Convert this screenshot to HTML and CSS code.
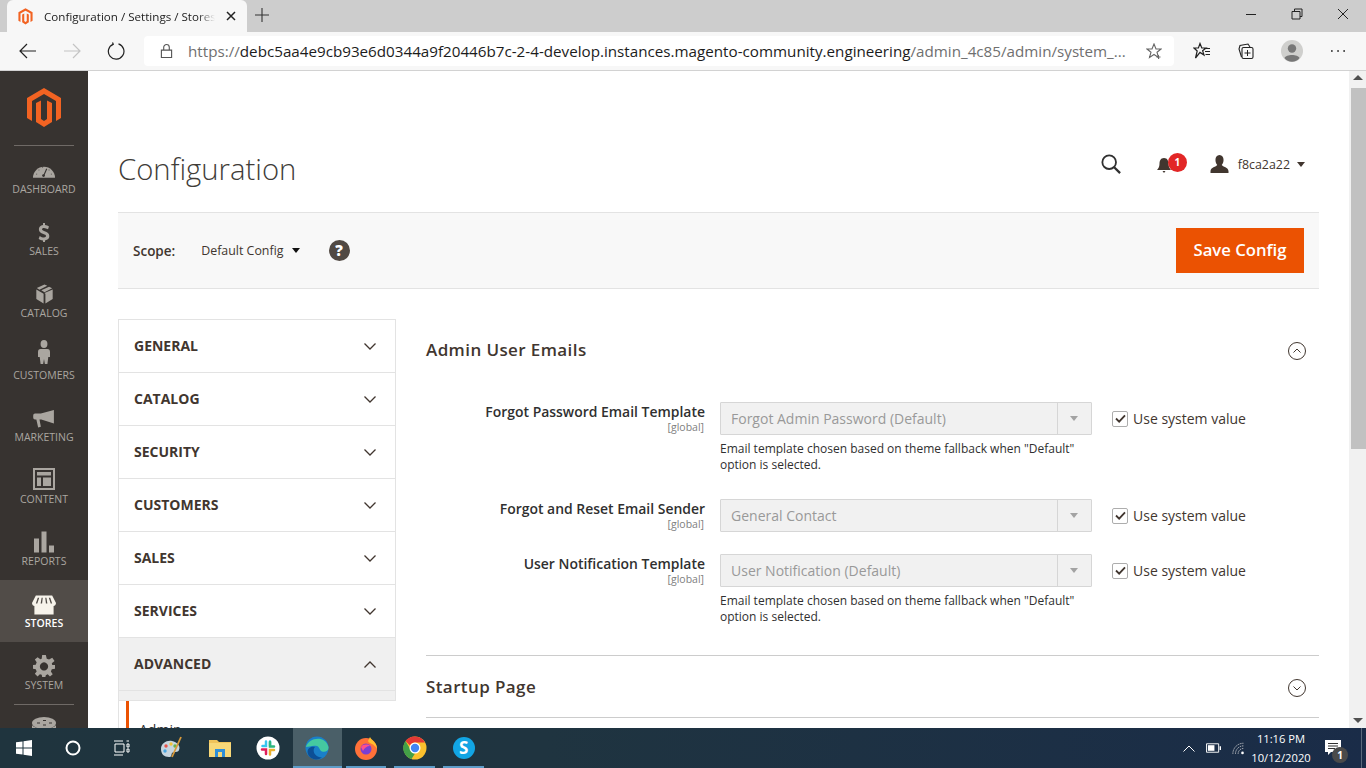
FILE: index.html
```html
<!DOCTYPE html>
<html lang="en">
<head>
    <meta charset="UTF-8">
    <title>Configuration / Settings / Stores</title>
    <link rel="stylesheet" href="styles.css">
</head>
<body>
<div class="screen">

    <!-- browser tabs -->
    <div class="tabstrip">
        <div class="tab">
            <svg class="tab-logo" viewBox="0 0 36 40"><path fill="#f26322" d="M18 0L35 10V30L30 33V13L18 6L6 13V33L1 30V10Z"/><path fill="#f26322" d="M10 15L15 12.5V31L18 33L21 31V12.5L26 15V34L18 39L10 34Z"/></svg>
            <span class="tab-title">Configuration / Settings / Stores</span>
            <svg class="tab-close" viewBox="0 0 10 10"><path d="M1 1L9 9M9 1L1 9" stroke="#222" stroke-width="1.5"/></svg>
        </div>
        <svg class="new-tab" viewBox="0 0 14 14"><path d="M7 0V14M0 7H14" stroke="#333" stroke-width="1.1"/></svg>
        <div class="win-controls">
            <svg viewBox="0 0 12 12"><path d="M1 6.5H11" stroke="#222"/></svg>
            <svg viewBox="0 0 12 12"><path d="M1 3.5H9V11H1ZM3.5 3.5V1H11V8.500H9" fill="none" stroke="#222"/></svg>
            <svg viewBox="0 0 12 12"><path d="M1 1L11 11M11 1L1 11" stroke="#222"/></svg>
        </div>
    </div>

    <!-- browser toolbar -->
    <div class="toolbar">
        <div class="nav-btn"><svg viewBox="0 0 18 18"><path d="M1 9H17M8 2L1 9L8 16" fill="none" stroke="#222" stroke-width="1.2"/></svg></div>
        <div class="nav-btn"><svg viewBox="0 0 18 18"><path d="M1 9H17M10 2L17 9L10 16" fill="none" stroke="#c4c4c4" stroke-width="1.2"/></svg></div>
        <div class="nav-btn"><svg viewBox="0 0 18 18"><path d="M6 2.200A7.800 7.800 0 1 0 11.500 1.900M5.500 0.500L6.300 2.400L4.200 3.800" fill="none" stroke="#222" stroke-width="1.2"/></svg></div>
        <div class="address">
            <svg class="lock" viewBox="0 0 14 16"><path d="M1.500 7H12.500V15H1.500ZM4 7V4A3 3 0 0 1 10 4V7" fill="none" stroke="#555" stroke-width="1.200"/></svg>
            <div class="url"><span class="url-dim">https://</span>debc5aa4e9cb93e6d0344a9f20446b7c-2-4-develop.instances.magento-community.engineering<span class="url-dim">/admin_4c85/admin/system_...</span></div>
            <svg class="star" viewBox="0 0 16 16"><path d="M8 1L10 6H15L11 9.200L12.500 14.500L8 11.500L3.500 14.500L5 9.200L1 6H6Z" fill="none" stroke="#666" stroke-width="1.100"/><path d="M12.500 12V16M10.500 14H14.500" stroke="#666"/></svg>
        </div>
        <div class="tool-icons">
            <svg viewBox="0 0 18 18"><path d="M7 1.500L8.800 6H13L9.600 8.700L11 13L7 10.400L2.500 16L4.200 9L1 6H5.400Z" fill="none" stroke="#222" stroke-width="1.200"/><path d="M11 6.500H17M12 9.500H17M12.500 12.500H17" stroke="#222"/></svg>
            <svg viewBox="0 0 18 18"><path d="M4.500 15L2 7L3 3.500L11 2L13 5" fill="none" stroke="#222" stroke-width="1.100"/><rect x="5" y="5.500" width="11" height="11" rx="1.500" fill="#f7f7f7" stroke="#222" stroke-width="1.100"/><path d="M10.500 8V14M7.500 11H13.500" stroke="#222"/></svg>
            <svg class="avatar" viewBox="0 0 22 22"><circle cx="11" cy="11" r="11" fill="#cfcfcd"/><circle cx="11" cy="8.500" r="4.200" fill="#777"/><path d="M3.500 18C5 14 17 14 18.500 18C15 23 7 23 3.500 18Z" fill="#777"/></svg>
            <svg viewBox="0 0 18 18"><path d="M2 9h1.700M8.200 9h1.700M14.300 9h1.700" stroke="#222" stroke-width="1.500"/></svg>
        </div>
    </div>

    <div class="viewport">

        <!-- magento admin menu -->
        <nav class="menu">
            <div class="menu-logo">
                <svg viewBox="0 0 36 40"><path fill="#f26322" d="M18 0L35 10V30L30 33V13L18 6L6 13V33L1 30V10Z"/><path fill="#f26322" d="M10 15L15 12.500V31L18 33L21 31V12.500L26 15V34L18 39L10 34Z"/></svg>
            </div>
            <div class="menu-item">
                <svg class="ic-dashboard" viewBox="0 0 24 16"><path d="M0 16A12 12 0 0 1 24 16Z"/><path d="M11.500 14L15 6" stroke="#373330" stroke-width="1.200"/><circle cx="11.500" cy="13.500" r="1.500" fill="#373330"/><path d="M3.500 12h1M6 7.500h1M10 4.500h1M17 7.500h1M19.500 12h1" stroke="#373330" stroke-width="0.800"/></svg>
                <span>Dashboard</span>
            </div>
            <div class="menu-item">
                <svg class="ic-sales" viewBox="0 0 18 24" preserveAspectRatio="none"><path d="M7.500 0H10.500V2.500C13 2.800 15 3.500 16.500 4.500L15 8C13 7 11 6.300 9 6.300C7 6.300 6 7 6 8C6 9.200 7.500 9.700 10 10.500C14 11.700 17 13 17 16.500C17 19.500 14.800 21.500 10.500 22V24H7.500V22C5 21.800 2.500 21 1 19.800L2.700 16.300C4.500 17.500 7 18.300 9 18.300C11 18.300 12 17.600 12 16.500C12 15.300 10.500 14.800 8 14C4 12.800 1.300 11.300 1.300 8C1.300 5 3.500 3 7.500 2.500Z"/></svg>
                <span>Sales</span>
            </div>
            <div class="menu-item">
                <svg class="ic-catalog" viewBox="0 0 20 22"><path d="M10 10L19 6V16.500L11 21.500V10.600ZM9 10.600V21.500L1 16.500V6Z"/><path d="M1.500 4.500L10 0.500L13 2L4.500 6.200ZM6.500 7L15 3L18.500 4.700L10 9Z"/></svg>
                <span>Catalog</span>
            </div>
            <div class="menu-item">
                <svg class="ic-customers" viewBox="0 0 14 24" preserveAspectRatio="none"><circle cx="7" cy="4" r="4"/><path d="M3 9H11C13 9 14 10 14 12V17H12L11 24H8L7 19L6 24H3L2 17H0V12C0 10 1 9 3 9Z"/></svg>
                <span>Customers</span>
            </div>
            <div class="menu-item">
                <svg class="ic-marketing" viewBox="0 0 24 20"><path d="M23 0V15L9 10.500H7L8.500 18.500L5.500 19.500L3.500 10.500H2C1 10.500 0 9.500 0 8V6.500C0 5 1 4 2 4H8.500Z"/></svg>
                <span>Marketing</span>
            </div>
            <div class="menu-item">
                <svg class="ic-content" viewBox="0 0 22 22"><path fill-rule="evenodd" d="M0 0H22V22H0ZM2 2V20H20V2ZM4 4H18V7.500H4ZM4 9.500H8V18H4ZM10 9.500H18V18H10Z"/></svg>
                <span>Content</span>
            </div>
            <div class="menu-item">
                <svg class="ic-reports" viewBox="0 0 20 21"><path d="M0 7H5V21H0ZM7.500 0H12.500V21H7.500ZM15 14H20V21H15Z"/></svg>
                <span>Reports</span>
            </div>
            <div class="menu-item active">
                <svg class="ic-stores" viewBox="0 0 25 20"><path fill-rule="evenodd" d="M4 0H21L25 8C25 10 23.500 11 22.500 11V20H2.500V11C1.500 11 0 10 0 8ZM6 2.500L4 8.500H5.500L7.500 2.500ZM10 2.500L9 8.500H10.500L11.200 2.500ZM13.800 2.500L14.500 8.500H16L15 2.500ZM17.500 2.500L19.500 8.500H21L19 2.500Z"/></svg>
                <span>Stores</span>
            </div>
            <div class="menu-item">
                <svg class="ic-system" viewBox="0 0 24 24"><path fill-rule="evenodd" d="M10 0H14L15 4L17.500 5L21 3L23.500 6.500L20.500 9L21 11H24V15L20.500 15.500L19.500 18L21.500 21L18.500 23.500L16 21L14 22L13.500 24H10L9.500 21.500L7.500 21L5 23.500L2 20.500L4 18L3 15.500L0 15V11L3 10.500L4 8L2 5L5 2.500L8 4.500L9.500 4ZM12 8A4.500 4.500 0 1 0 12.010 8Z"/></svg>
                <span>System</span>
            </div>
            <div class="menu-item menu-extra">
                <svg viewBox="0 0 24 20"><ellipse cx="12" cy="6" rx="12" ry="6"/><path d="M0 8C3 13 21 13 24 8V16C21 21 3 21 0 16Z"/><path d="M5 6h3M11 3.500h3M11 8h3M17 6h3" stroke="#373330"/></svg>
            </div>
        </nav>

        <!-- page -->
        <main class="page">
            <header class="page-head">
                <h1>Configuration</h1>
                <div class="head-actions">
                    <svg class="search-icon" viewBox="0 0 22 22"><circle cx="9" cy="9" r="7.500" fill="none" stroke="#303030" stroke-width="2"/><path d="M14.500 14.500L21 21" stroke="#303030" stroke-width="2.500"/></svg>
                    <div class="bell">
                        <svg viewBox="0 0 16 16"><path d="M8 1C11.500 1 12.500 4 12.500 7C12.500 10 14 12 15 13H1C2 12 3.500 10 3.500 7C3.500 4 4.500 1 8 1ZM6.500 14H9.500L8 16Z" fill="#41362f"/></svg>
                        <span class="badge">1</span>
                    </div>
                    <div class="user">
                        <svg viewBox="0 0 20 20"><path d="M10 0C13 0 14.500 2.500 14.500 5.500C14.500 8 13.500 10 12.500 11C13.500 13 20 13.500 20 18V20H0V18C0 13.500 6.500 13 7.500 11C6.500 10 5.500 8 5.500 5.500C5.500 2.500 7 0 10 0Z" fill="#41362f"/></svg>
                        <span>f8ca2a22</span>
                        <i class="caret"></i>
                    </div>
                </div>
            </header>

            <div class="action-bar">
                <div class="scope">
                    <strong>Scope:</strong>
                    <span class="scope-value">Default Config</span>
                    <i class="caret"></i>
                    <span class="help">?</span>
                </div>
                <button class="save-btn">Save Config</button>
            </div>

            <div class="columns">
                <aside class="tabs">
                    <div class="tab-row">General <svg viewBox="0 0 12 7"><path d="M0.500 0.500L6 6L11.500 0.500" fill="none" stroke="#41362f" stroke-width="1.300"/></svg></div>
                    <div class="tab-row">Catalog <svg viewBox="0 0 12 7"><path d="M0.500 0.500L6 6L11.500 0.500" fill="none" stroke="#41362f" stroke-width="1.300"/></svg></div>
                    <div class="tab-row">Security <svg viewBox="0 0 12 7"><path d="M0.500 0.500L6 6L11.500 0.500" fill="none" stroke="#41362f" stroke-width="1.300"/></svg></div>
                    <div class="tab-row">Customers <svg viewBox="0 0 12 7"><path d="M0.500 0.500L6 6L11.500 0.500" fill="none" stroke="#41362f" stroke-width="1.300"/></svg></div>
                    <div class="tab-row">Sales <svg viewBox="0 0 12 7"><path d="M0.500 0.500L6 6L11.500 0.500" fill="none" stroke="#41362f" stroke-width="1.300"/></svg></div>
                    <div class="tab-row">Services <svg viewBox="0 0 12 7"><path d="M0.500 0.500L6 6L11.500 0.500" fill="none" stroke="#41362f" stroke-width="1.300"/></svg></div>
                    <div class="tab-row open">Advanced <svg viewBox="0 0 12 7"><path d="M0.500 6.500L6 1L11.500 6.500" fill="none" stroke="#41362f" stroke-width="1.300"/></svg></div>
                    <div class="tab-gap"></div>
                    <div class="tab-sub">Admin</div>
                </aside>

                <section class="content">
                    <div class="section-head">
                        <h2>Admin User Emails</h2>
                        <svg viewBox="0 0 18 18"><circle cx="9" cy="9" r="8.500" fill="none" stroke="#41362f"/><path d="M5.500 10.500L9 7L12.500 10.500" fill="none" stroke="#41362f"/></svg>
                    </div>

                    <div class="field">
                        <div class="field-label">Forgot Password Email Template<small>[global]</small></div>
                        <div>
                            <div class="select">Forgot Admin Password (Default)<i class="select-arrow"></i></div>
                            <p class="note">Email template chosen based on theme fallback when "Default" option is selected.</p>
                        </div>
                        <label class="inherit"><i class="check"><svg viewBox="0 0 12 10"><path d="M1 5L4.500 8.500L11 1.500" fill="none" stroke="#41362f" stroke-width="2"/></svg></i>Use system value</label>
                    </div>

                    <div class="field">
                        <div class="field-label">Forgot and Reset Email Sender<small>[global]</small></div>
                        <div>
                            <div class="select">General Contact<i class="select-arrow"></i></div>
                        </div>
                        <label class="inherit"><i class="check"><svg viewBox="0 0 12 10"><path d="M1 5L4.500 8.500L11 1.500" fill="none" stroke="#41362f" stroke-width="2"/></svg></i>Use system value</label>
                    </div>

                    <div class="field">
                        <div class="field-label">User Notification Template<small>[global]</small></div>
                        <div>
                            <div class="select">User Notification (Default)<i class="select-arrow"></i></div>
                            <p class="note">Email template chosen based on theme fallback when "Default" option is selected.</p>
                        </div>
                        <label class="inherit"><i class="check"><svg viewBox="0 0 12 10"><path d="M1 5L4.500 8.500L11 1.500" fill="none" stroke="#41362f" stroke-width="2"/></svg></i>Use system value</label>
                    </div>

                    <div class="section-head closed">
                        <h2>Startup Page</h2>
                        <svg viewBox="0 0 18 18"><circle cx="9" cy="9" r="8.500" fill="none" stroke="#41362f"/><path d="M5.500 7.500L9 11L12.500 7.500" fill="none" stroke="#41362f"/></svg>
                    </div>
                </section>
            </div>
        </main>

        <!-- page scrollbar -->
        <div class="scrollbar">
            <i class="arrow-up"></i>
            <div class="thumb"></div>
            <i class="arrow-down"></i>
        </div>
    </div>

    <!-- windows taskbar -->
    <footer class="taskbar">
        <div class="task-icons">
            <div class="task"><svg viewBox="0 0 16 16"><path fill="#fff" d="M0 2.300L6.500 1.400V7.500H0ZM7.500 1.300L16 0V7.500H7.500ZM0 8.500H6.500V14.600L0 13.700ZM7.500 8.500H16V16L7.500 14.700Z"/></svg></div>
            <div class="task"><svg viewBox="0 0 16 16"><circle cx="8" cy="8" r="6.500" fill="none" stroke="#fff" stroke-width="2"/></svg></div>
            <div class="task"><svg viewBox="0 0 16 16"><path d="M0 1H9M0 15H9M1 4H10V12H1ZM12.500 1H15M13 4H15V7H13ZM13 9H15V12H13Z" fill="none" stroke="#fff"/></svg></div>
            <div class="task"><svg class="big" viewBox="0 0 24 24"><path d="M2 13C2 7 8 4 13 5C18 6 22 10 20 14C19 17 15 15 13 17C12 19 13 21 10 21C5 21 2 18 2 13Z" fill="#c8d6e0"/><circle cx="7" cy="10" r="1.700" fill="#e8534a"/><circle cx="12" cy="8" r="1.700" fill="#f3c33b"/><circle cx="6" cy="15" r="1.700" fill="#4aa5e0"/><circle cx="16" cy="10" r="1.700" fill="#68b34a"/><path d="M22 1L13 21" stroke="#d89a3c" stroke-width="1.800"/></svg></div>
            <div class="task"><svg class="big" viewBox="0 0 24 20"><path d="M1 2H9L11 4H23V19H1Z" fill="#f0c35a"/><path d="M1 5H23V19H1Z" fill="#f8d878"/><path d="M7 19V11H17V19H14V14H10V19Z" fill="#2f8fd8"/></svg></div>
            <div class="task"><svg class="big" viewBox="0 0 24 24"><circle cx="12" cy="12" r="11.500" fill="#fff"/><path d="M10 5.500V10H6.500M14 5.500V10" stroke="#36c5f0" stroke-width="2.500" stroke-linecap="round" fill="none"/><path d="M14 6V10.500H18" stroke="#2eb67d" stroke-width="2.500" stroke-linecap="round" fill="none"/><path d="M14 18.500V14H18" stroke="#ecb22e" stroke-width="2.500" stroke-linecap="round" fill="none"/><path d="M10 18V13.500H6" stroke="#e01e5a" stroke-width="2.500" stroke-linecap="round" fill="none"/></svg></div>
            <div class="task current"><svg class="big" viewBox="0 0 24 24"><circle cx="12" cy="12" r="11.500" fill="#1a7fc8"/><path d="M1 11C3 2 20 -2 23.500 11C24 15 20 16.500 17 15.500C14 14.500 15 11 12 10C8 9 3 11 1 11Z" fill="#45c9a0"/><path d="M4 20C0 14 5 10 10 11C7 14 9 21 17 21.500C13 24.500 7 24 4 20Z" fill="#0c4f96"/></svg></div>
            <div class="task open-app"><svg class="big" viewBox="0 0 24 24"><circle cx="12" cy="13" r="11" fill="#ff7139"/><path d="M16 1C17 4 23 6 23 13C20 7 15 8 14 5Z" fill="#ffbd2e"/><circle cx="12" cy="13" r="5.500" fill="#7b3fd1"/><path d="M7 11C9 8 14 8 16 10C13 10 10 12 9 15Z" fill="#ff4f8b"/></svg></div>
            <div class="task open-app"><svg class="big" viewBox="0 0 24 24"><circle cx="12" cy="12" r="11.500" fill="#fbc02d"/><path d="M12 .5A11.500 11.500 0 0 1 22 6.500H12A5.500 5.500 0 0 0 7 9.500L2.500 5A11.500 11.500 0 0 1 12 .5Z" fill="#e53935"/><path d="M2.500 5L7.500 13.500A5 5 0 0 0 12 17.500L8.500 23A11.500 11.500 0 0 1 2.500 5Z" fill="#43a047"/><circle cx="12" cy="12" r="5.500" fill="#fff"/><circle cx="12" cy="12" r="4.200" fill="#4285f4"/></svg></div>
            <div class="task open-app"><span class="skype">S</span></div>
        </div>
        <div class="tray">
            <svg class="tray-chevron" viewBox="0 0 12 7"><path d="M0.500 6.500L6 1L11.500 6.500" fill="none" stroke="#fff"/></svg>
            <svg class="tray-battery" viewBox="0 0 16 10"><path d="M.5 .5H13.500V9.500H.5Z" fill="none" stroke="#fff"/><path d="M2 2H9V8H2Z" fill="#fff"/><path d="M14.500 3H16V7H14.500Z" fill="#fff"/></svg>
            <svg class="tray-wifi" viewBox="0 0 16 14"><path d="M1 13A12 12 0 0 1 13 1M4 13A9 9 0 0 1 13 4M7 13A6 6 0 0 1 13 7" fill="none" stroke="#d8d8d8" stroke-dasharray="1.500 1"/><circle cx="12" cy="12" r="1.500" fill="#fff"/></svg>
            <div class="clock"><div>11:16 PM</div><div>10/12/2020</div></div>
            <div class="notify"><svg viewBox="0 0 16 16"><path d="M0 0H16V12H6L3 15V12H0Z" fill="#fff"/><path d="M3 3.500H13M3 6H13M3 8.500H10" stroke="#333"/></svg><span class="notify-count">1</span></div>
            <div class="show-desktop"></div>
        </div>
    </footer>
</div>
</body>
</html>
```

FILE: styles.css
```css
* { box-sizing: border-box; }

html, body {
    margin: 0;
    height: 100%;
    overflow: hidden;
}

body {
    font-family: "Open Sans", "Noto Sans", sans-serif;
    color: #303030;
    background: white;
}

.screen {
    width: 1366px;
    height: 768px;
    display: flex;
    flex-direction: column;
    overflow: hidden;
}

/* browser */
.tabstrip {
    height: 32px;
    flex: none;
    display: flex;
    align-items: center;
    padding-left: 7px;
    background: #cdcdcd;
}

.tab {
    width: 240px;
    height: 32px;
    display: flex;
    align-items: center;
    padding-left: 11px;
    background: #f7f7f7;
    border-radius: 6px 6px 0 0;
}

.tab-logo { width: 15px; height: 17px; flex: none; }

.tab-title {
    width: 171px;
    margin-left: 11px;
    font-size: 11.600px;
    white-space: nowrap;
    overflow: hidden;
    color: #222;
    -webkit-mask-image: linear-gradient(to right, black 90%, transparent 100%);
    mask-image: linear-gradient(to right, black 90%, transparent 100%);
}

.tab-close { width: 10px; height: 10px; margin-left: 11px; flex: none; }

.new-tab { width: 14px; height: 14px; margin: -2px 0 0 8px; }

.win-controls {
    margin: -4px 0 0 auto;
    display: flex;
    gap: 34px;
    padding-right: 17px;
}

.win-controls svg { width: 12px; height: 12px; display: block; }

.toolbar {
    height: 39px;
    flex: none;
    display: flex;
    align-items: center;
    padding-left: 6px;
    background: #f7f7f7;
    border-bottom: 1px solid #d2d2d2;
}

.nav-btn {
    width: 44px;
    display: flex;
    justify-content: center;
}

.nav-btn svg { width: 18px; height: 18px; }

.address {
    width: 1030px;
    height: 30px;
    margin-left: 6px;
    display: flex;
    align-items: center;
    padding-left: 16px;
    background: white;
    border-radius: 4px;
}

.lock { width: 13px; height: 16px; flex: none; }

.url {
    width: 939px;
    margin-left: 15px;
    font-size: 15.200px;
    white-space: nowrap;
    overflow: hidden;
    color: #1c1c1c;
}

.url-dim { color: #6f6f6f; }

.star { width: 16px; height: 16px; margin-left: 19px; flex: none; }

.tool-icons {
    display: flex;
    align-items: center;
    gap: 26px;
    margin-left: 19px;
}

.tool-icons svg { width: 18px; height: 18px; display: block; }

.tool-icons .avatar { width: 22px; height: 22px; }

.viewport {
    flex: 1;
    min-height: 0;
    display: flex;
}

/* admin menu */
.menu {
    width: 88px;
    flex: none;
    background: #373330;
    overflow: hidden;
}

.menu-logo {
    height: 75px;
    margin: 0 14px;
    padding-top: 17px;
    display: flex;
    justify-content: center;
    border-bottom: 1px solid #6f6a66;
}

.menu-logo svg { width: 36px; height: 40px; flex: none; }

.menu-item {
    height: 62px;
    display: flex;
    flex-direction: column;
    align-items: center;
    justify-content: flex-end;
    padding-bottom: 28px;
    font-size: 10.500px;
    text-transform: uppercase;
    color: #aaa6a0;
    position: relative;
}

.menu-item svg { fill: #aaa6a0; flex: none; }

.ic-dashboard { width: 22px; height: 15px; margin-bottom: 2px; }
.ic-sales { width: 12px; height: 19px; }
.ic-catalog { width: 19px; height: 20px; }
.ic-customers { width: 12px; height: 24px; margin-bottom: 2px; }
.ic-marketing { width: 22px; height: 18px; }
.ic-content { width: 22px; height: 22px; }
.ic-reports { width: 20px; height: 22px; margin-bottom: -1px; }
.ic-stores { width: 24px; height: 20px; margin-bottom: -1px; }
.ic-system { width: 22px; height: 22px; margin-bottom: -1px; }

.menu-item span {
    position: absolute;
    top: 35px;
    line-height: 16px;
}

.menu-item.active {
    background: #514c48;
    color: white;
    font-weight: 600;
}

.menu-item.active svg { fill: #f7f3eb; }

.menu-extra {
    margin: 0 14px;
    padding: 12px 0 0;
    justify-content: flex-start;
    border-top: 1px solid #6f6a66;
}

.menu-extra svg { width: 24px; height: 20px; }

/* page */
.page {
    flex: 1;
    min-width: 0;
    padding: 78px 30px 0;
    overflow: hidden;
}

.page-head {
    height: 40px;
    display: flex;
    justify-content: space-between;
    align-items: center;
    margin-bottom: 23px;
}

.page-head h1 {
    margin: 0;
    font-size: 29.300px;
    font-weight: 300;
    color: #403c38;
}

.head-actions {
    display: flex;
    align-items: center;
    padding-right: 14px;
}

.search-icon { width: 20px; height: 20px; margin-top: -10px; }

.bell {
    width: 32px;
    height: 24px;
    margin-left: 35px;
    position: relative;
}

.bell svg { width: 16px; height: 16px; display: block; }

.badge {
    position: absolute;
    top: -4px;
    left: 12px;
    width: 19px;
    height: 19px;
    border-radius: 50%;
    background: #e22626;
    color: white;
    font-size: 10px;
    font-weight: 700;
    line-height: 19px;
    text-align: center;
}

.user {
    margin-left: 22px;
    margin-top: -10px;
    display: flex;
    align-items: center;
    font-size: 12.400px;
    color: #41362f;
}

.user svg { width: 19px; height: 18px; margin-right: 9px; }

.caret {
    display: inline-block;
    width: 0;
    height: 0;
    border: 4px solid transparent;
    border-top: 5px solid #41362f;
    border-bottom: 0;
}

.user .caret { margin-left: 7px; }

.action-bar {
    height: 77px;
    display: flex;
    justify-content: space-between;
    align-items: center;
    padding: 0 15px;
    background: #f8f8f8;
    border-top: 1px solid #e3e3e3;
    border-bottom: 1px solid #e3e3e3;
}

.scope {
    display: flex;
    align-items: center;
    font-size: 13.500px;
    color: #41362f;
}

.scope strong { font-weight: 600; }

.scope-value {
    margin-left: 26px;
    font-size: 12.400px;
}

.scope .caret { margin-left: 8px; border-top-color: #111; }

.help {
    width: 21px;
    height: 21px;
    margin-left: 29px;
    border-radius: 50%;
    background: #514943;
    color: white;
    font-size: 15px;
    font-weight: 800;
    line-height: 21px;
    text-align: center;
}

.save-btn {
    width: 128px;
    height: 45px;
    padding: 0 0 2px;
    border: 0;
    background: #eb5202;
    color: white;
    font-family: inherit;
    font-size: 16.700px;
    font-weight: 600;
}

.columns {
    display: flex;
    margin-top: 30px;
}

/* left tabs */
.tabs {
    width: 278px;
    flex: none;
    border: 1px solid #e3e3e3;
    border-bottom: 0;
}

.tab-row {
    height: 53px;
    display: flex;
    justify-content: space-between;
    align-items: center;
    padding: 0 19px 2px 15px;
    font-size: 14px;
    font-weight: 700;
    text-transform: uppercase;
    color: #41362f;
    border-bottom: 1px solid #e3e3e3;
}

.tab-row svg { width: 12px; height: 7px; margin-top: 2px; }

.tab-row.open { background: #f0f0f0; }

.tab-gap {
    height: 10px;
    background: #f0f0f0;
    border-bottom: 1px solid #e3e3e3;
}

.tab-sub {
    margin-left: 7px;
    padding: 19px 0 0 10px;
    border-left: 3px solid #eb5202;
    font-size: 14px;
    margin-right: -1px;
    background: white;
}

/* right column */
.content {
    flex: 1;
    min-width: 0;
    margin-left: 30px;
}

.section-head {
    height: 63px;
    display: flex;
    justify-content: space-between;
    align-items: center;
    padding-right: 13px;
    margin-bottom: 20px;
}

.section-head h2 {
    margin: -2px 0 0;
    font-size: 17px;
    font-weight: 600;
    letter-spacing: 0.400px;
    color: #41362f;
}

.section-head svg { width: 18px; height: 18px; }

.section-head.closed {
    height: 63px;
    margin: 26px 0 0;
    padding-top: 2px;
    border-top: 1px solid #cccccc;
    border-bottom: 1px solid #cccccc;
}

.field {
    display: grid;
    grid-template-columns: 279px 372px auto;
    column-gap: 15px;
    margin-bottom: 22px;
}

.field-label {
    text-align: right;
    font-size: 13.950px;
    font-weight: 600;
    line-height: 19px;
    color: #303030;
}

.field-label small {
    display: block;
    padding-right: 1px;
    font-size: 10.500px;
    font-weight: 400;
    line-height: 12px;
    color: #808080;
}

.select {
    height: 33px;
    position: relative;
    padding-left: 10px;
    background: #f1f1f1;
    border: 1px solid #d6d6d6;
    border-radius: 1px;
    font-size: 14px;
    line-height: 31px;
    color: #999;
}

.select-arrow {
    position: absolute;
    top: 0;
    right: 0;
    width: 34px;
    height: 31px;
    border-left: 1px solid #d6d6d6;
}

.select-arrow::after {
    content: "";
    position: absolute;
    top: 13px;
    left: 12px;
    border: 4px solid transparent;
    border-top: 5px solid #a3a3a3;
    border-bottom: 0;
}

.note {
    margin: 6px 0 4px;
    font-size: 12px;
    line-height: 16px;
    color: #303030;
}

.inherit {
    height: 33px;
    margin-left: 5px;
    display: flex;
    align-items: center;
    font-size: 14px;
    color: #41362f;
}

.check {
    width: 16px;
    height: 16px;
    margin-right: 5px;
    display: flex;
    align-items: center;
    justify-content: center;
    border: 1px solid #adadad;
    border-radius: 2px;
    background: white;
}

.check svg { width: 11px; height: 9px; }

/* scrollbar */
.scrollbar {
    width: 17px;
    flex: none;
    position: relative;
    background: #f1f1f1;
}

.thumb {
    height: 361px;
    margin: 17px 0 0 2px;
    background: #c1c1c1;
}

.arrow-up, .arrow-down {
    position: absolute;
    left: 4px;
    border: 5px solid transparent;
}

.arrow-up { top: 4px; border-bottom-color: #505050; border-top: 0; }
.arrow-down { bottom: 5px; border-top-color: #505050; border-bottom: 0; }

/* taskbar */
.taskbar {
    height: 40px;
    flex: none;
    display: flex;
    justify-content: space-between;
    background: linear-gradient(to right, #1f343e, #1f3440 40%, #1a2c48);
}

.task-icons { display: flex; }

.task {
    width: 48.800px;
    display: flex;
    align-items: center;
    justify-content: center;
}

.task svg { width: 16px; height: 16px; }
.task svg.big { width: 24px; height: 24px; }

.task.current {
    background: #4a5f68;
    border-bottom: 2px solid #5d9cc8;
    padding-top: 2px;
}

.task.open-app {
    position: relative;
}

.task.open-app::after {
    content: "";
    position: absolute;
    left: 4px;
    right: 4px;
    bottom: 0;
    height: 2px;
    background: #5d9cc8;
}

.skype {
    width: 22px;
    height: 22px;
    border-radius: 50%;
    background: #12a5e4;
    color: white;
    font-size: 17px;
    font-weight: 700;
    line-height: 22px;
    text-align: center;
}

.tray {
    display: flex;
    align-items: center;
    color: white;
}

.tray-chevron { width: 12px; height: 7px; }
.tray-battery { width: 15px; height: 10px; margin-left: 11px; }
.tray-wifi { width: 14px; height: 13px; margin-left: 11px; }

.clock {
    width: 74px;
    margin-left: -2px;
    font-size: 11.200px;
    line-height: 19px;
    text-align: center;
}

.notify {
    width: 34px;
    margin-left: 7px;
    position: relative;
    height: 26px;
}

.notify svg { width: 16px; height: 16px; position: absolute; top: 5px; left: 0; }

.notify-count {
    position: absolute;
    top: 12px;
    left: 7px;
    width: 16px;
    height: 16px;
    border-radius: 50%;
    background: #4a4a4a;
    font-size: 10px;
    font-weight: 700;
    line-height: 16px;
    text-align: center;
}

.show-desktop {
    width: 5px;
    height: 40px;
    margin-left: 2px;
    border-left: 1px solid #5a6a7c;
}
```
